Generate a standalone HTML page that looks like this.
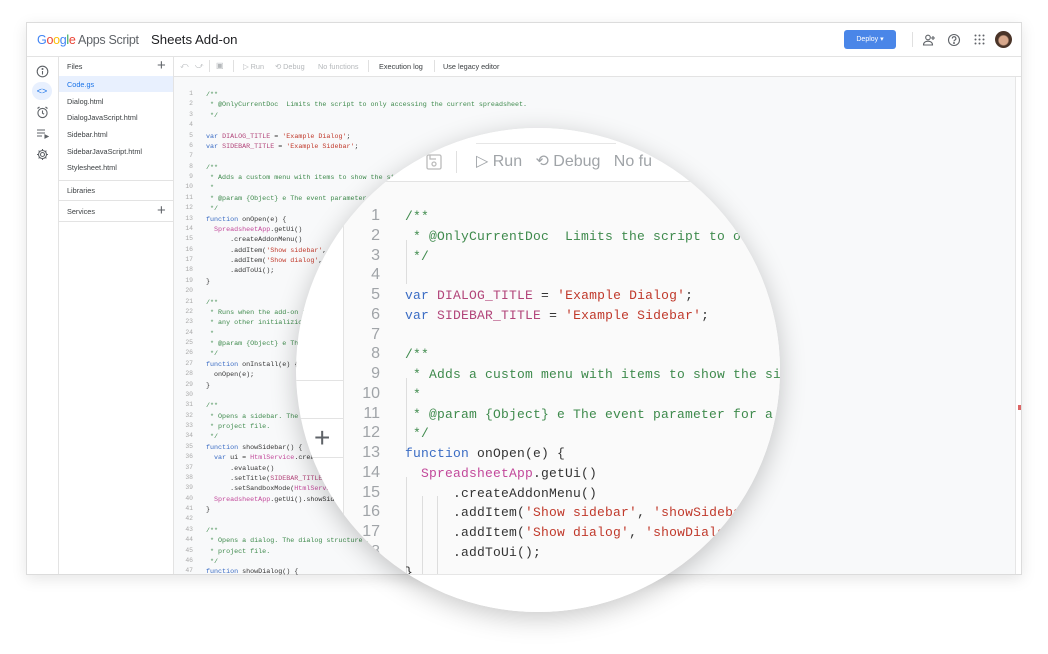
<!DOCTYPE html>
<html><head><meta charset="utf-8">
<style>
*{margin:0;padding:0;box-sizing:border-box}
body{width:1048px;height:654px;background:#fff;position:relative;overflow:hidden;font-family:"Liberation Sans",sans-serif;color:#3c4043}
.abs{position:absolute}
#win{left:26px;top:22px;width:996px;height:553px;background:#fff;border:1px solid #dcdcdc;box-shadow:0 4px 14px rgba(0,0,0,.10)}
.code{font-family:"Liberation Mono",monospace;white-space:pre;color:#333}
.c{color:#3e8a4c}.k{color:#3a6cc4}.v{color:#b2457a}.s{color:#c0392b}.p{color:#c2489a}
.ln{color:#aaa;text-align:right}
.fi{font-size:7.3px;color:#3c4043;position:absolute;left:67px}
.tb{position:absolute;top:62px;font-size:7.3px;color:#b5b8bb;white-space:pre}
</style></head><body>
<div id="win" class="abs"></div>
<!-- header -->
<div class="abs" style="left:37px;top:33px;font-size:12.5px;letter-spacing:-0.3px"><span style="color:#4285f4">G</span><span style="color:#ea4335">o</span><span style="color:#fbbc05">o</span><span style="color:#4285f4">g</span><span style="color:#34a853">l</span><span style="color:#ea4335">e</span> <span style="color:#5f6368">Apps Script</span></div>
<div class="abs" style="left:151px;top:32px;font-size:13.2px;color:#202124">Sheets Add-on</div>
<div class="abs" style="left:27px;top:56px;width:994px;height:1px;background:#e3e3e3"></div>
<div class="abs" style="left:844px;top:30px;width:52px;height:19px;background:#4a86e8;border-radius:3px;color:#fff;font-size:7px;line-height:19px;text-align:center">Deploy ▾</div>
<div class="abs" style="left:912px;top:32px;width:1px;height:15px;background:#e0e0e0"></div>
<svg class="abs" style="left:922px;top:33px" width="14" height="14" viewBox="0 0 14 14" fill="none" stroke="#5f6368" stroke-width="1.1"><circle cx="6" cy="4.5" r="2.3"/><path d="M1.5 12c0-2.5 2-3.8 4.5-3.8s4.5 1.3 4.5 3.8z"/><path d="M11 3v4M9 5h4"/></svg>
<svg class="abs" style="left:947px;top:33px" width="14" height="14" viewBox="0 0 14 14" fill="none" stroke="#5f6368" stroke-width="1.1"><circle cx="7" cy="7" r="5.5"/><path d="M5.3 5.5a1.8 1.8 0 1 1 2.3 1.7c-.5.2-.6.6-.6 1.2"/><circle cx="7" cy="10" r=".4" fill="#5f6368"/></svg>
<svg class="abs" style="left:974px;top:34px" width="11" height="11" viewBox="0 0 11 11" fill="#5f6368"><circle cx="1.5" cy="1.5" r="1"/><circle cx="5.5" cy="1.5" r="1"/><circle cx="9.5" cy="1.5" r="1"/><circle cx="1.5" cy="5.5" r="1"/><circle cx="5.5" cy="5.5" r="1"/><circle cx="9.5" cy="5.5" r="1"/><circle cx="1.5" cy="9.5" r="1"/><circle cx="5.5" cy="9.5" r="1"/><circle cx="9.5" cy="9.5" r="1"/></svg>
<div class="abs" style="left:995px;top:31px;width:17px;height:17px;border-radius:50%;background:radial-gradient(circle at 50% 55%,#d8a88c 0 35%,#4a3428 45%)"></div>
<!-- left rail -->
<div class="abs" style="left:58px;top:57px;width:1px;height:517px;background:#e3e3e3"></div>
<svg class="abs" style="left:36px;top:65px" width="13" height="13" viewBox="0 0 13 13" fill="none" stroke="#5f6368" stroke-width="1.1"><circle cx="6.5" cy="6.5" r="5.3"/><path d="M6.5 6v3.5"/><circle cx="6.5" cy="4" r=".5" fill="#5f6368"/></svg>
<div class="abs" style="left:32px;top:82px;width:20px;height:18px;border-radius:9px;background:#e8f0fe;color:#1a73e8;font-size:9px;text-align:center;line-height:18px">&lt;&gt;</div>
<svg class="abs" style="left:36px;top:106px" width="13" height="13" viewBox="0 0 13 13" fill="none" stroke="#5f6368" stroke-width="1.1"><circle cx="6.5" cy="7" r="4.6"/><path d="M6.5 4.5v2.7l1.6 1M1.5 2.5l2-1.5M11.5 2.5l-2-1.5"/></svg>
<svg class="abs" style="left:36px;top:128px" width="13" height="11" viewBox="0 0 13 11" fill="none" stroke="#5f6368" stroke-width="1.1"><path d="M1 2h8M1 5h8M1 8h5"/><path d="M9 7l3 1.5-3 1.5z" fill="#5f6368"/></svg>
<svg class="abs" style="left:36px;top:148px" width="13" height="13" viewBox="0 0 13 13" fill="none" stroke="#5f6368" stroke-width="1.1"><circle cx="6.5" cy="6.5" r="2"/><path d="M6.5 1v2M6.5 10v2M1 6.5h2M10 6.5h2M2.6 2.6l1.4 1.4M9 9l1.4 1.4M2.6 10.4L4 9M9 4l1.4-1.4"/><circle cx="6.5" cy="6.5" r="4"/></svg>
<!-- files panel -->
<div class="abs" style="left:173px;top:57px;width:1px;height:517px;background:#e3e3e3"></div>
<div class="fi" style="top:62px">Files</div>
<div class="abs" style="left:157px;top:57px;font-size:15px;color:#5f6368">+</div>
<div class="abs" style="left:59px;top:76px;width:114px;height:16px;background:#e8f0fe"></div>
<div class="fi" style="top:80px;color:#1a73e8">Code.gs</div>
<div class="fi" style="top:97px">Dialog.html</div>
<div class="fi" style="top:113px">DialogJavaScript.html</div>
<div class="fi" style="top:130px">Sidebar.html</div>
<div class="fi" style="top:147px">SidebarJavaScript.html</div>
<div class="fi" style="top:163px">Stylesheet.html</div>
<div class="abs" style="left:59px;top:180px;width:114px;height:1px;background:#e3e3e3"></div>
<div class="fi" style="top:186px">Libraries</div>
<div class="abs" style="left:59px;top:200px;width:114px;height:1px;background:#e3e3e3"></div>
<div class="fi" style="top:207px">Services</div>
<div class="abs" style="left:157px;top:202px;font-size:15px;color:#5f6368">+</div>
<div class="abs" style="left:59px;top:221px;width:114px;height:1px;background:#e3e3e3"></div>
<!-- toolbar -->
<div class="abs" style="left:174px;top:76px;width:847px;height:1px;background:#e3e3e3"></div>
<div class="tb" style="left:180px;font-size:8px;top:61px">⤺</div>
<div class="tb" style="left:195px;font-size:8px;top:61px">⤻</div>
<div class="abs" style="left:209px;top:60px;width:1px;height:12px;background:#e0e0e0"></div>
<div class="tb" style="left:216px;font-size:8px;top:61px">▣</div>
<div class="abs" style="left:233px;top:60px;width:1px;height:12px;background:#e0e0e0"></div>
<div class="tb" style="left:243px">▷ Run</div>
<div class="tb" style="left:275px">⟲ Debug</div>
<div class="tb" style="left:318px">No functions</div>
<div class="abs" style="left:368px;top:60px;width:1px;height:12px;background:#e0e0e0"></div>
<div class="abs" style="left:379px;top:62px;font-size:7.3px;color:#3c4043">Execution log</div>
<div class="abs" style="left:434px;top:60px;width:1px;height:12px;background:#e0e0e0"></div>
<div class="abs" style="left:443px;top:62px;font-size:7.3px;color:#3c4043">Use legacy editor</div>
<!-- code area -->
<div class="abs" style="left:174px;top:77px;width:841px;height:497px;background:#f8f9fa"></div>
<div class="abs" style="left:1015px;top:77px;width:1px;height:497px;background:#e6e6e6"></div>
<div class="abs" style="left:1018px;top:405px;width:3px;height:5px;background:#d66"></div>
<div class="abs code ln" style="left:176px;top:89px;width:17px;font-size:6.4px;line-height:10.37px">1
2
3
4
5
6
7
8
9
10
11
12
13
14
15
16
17
18
19
20
21
22
23
24
25
26
27
28
29
30
31
32
33
34
35
36
37
38
39
40
41
42
43
44
45
46
47</div>
<div class="abs code" style="left:206px;top:90px;font-size:6.7px;line-height:10.37px"><span class="c">/**
 * @OnlyCurrentDoc  Limits the script to only accessing the current spreadsheet.
 */</span>

<span class="k">var</span> <span class="v">DIALOG_TITLE</span> = <span class="s">'Example Dialog'</span>;
<span class="k">var</span> <span class="v">SIDEBAR_TITLE</span> = <span class="s">'Example Sidebar'</span>;

<span class="c">/**
 * Adds a custom menu with items to show the sidebar and dialog.
 *
 * @param {Object} e The event parameter for a simple onOpen trigger.
 */</span>
<span class="k">function</span> onOpen(e) {
  <span class="p">SpreadsheetApp</span>.getUi()
      .createAddonMenu()
      .addItem(<span class="s">'Show sidebar'</span>, <span class="s">'showSidebar'</span>)
      .addItem(<span class="s">'Show dialog'</span>, <span class="s">'showDialog'</span>)
      .addToUi();
}

<span class="c">/**
 * Runs when the add-on is installed; calls onOpen() to ensure menu creation and
 * any other initializion work is done immediately.
 *
 * @param {Object} e The event parameter for a simple onInstall trigger.
 */</span>
<span class="k">function</span> onInstall(e) {
  onOpen(e);
}

<span class="c">/**
 * Opens a sidebar. The sidebar structure is described in the Sidebar.html
 * project file.
 */</span>
<span class="k">function</span> showSidebar() {
  <span class="k">var</span> ui = <span class="p">HtmlService</span>.createTemplateFromFile(<span class="s">'Sidebar'</span>)
      .evaluate()
      .setTitle(<span class="v">SIDEBAR_TITLE</span>)
      .setSandboxMode(<span class="p">HtmlService</span>.SandboxMode.IFRAME);
  <span class="p">SpreadsheetApp</span>.getUi().showSidebar(ui);
}

<span class="c">/**
 * Opens a dialog. The dialog structure is described in the Dialog.html
 * project file.
 */</span>
<span class="k">function</span> showDialog() {</div>

<!-- magnifier -->
<div class="abs" style="left:296px;top:128px;width:484px;height:484px;border-radius:50%;box-shadow:0 6px 26px rgba(0,0,0,.22);background:#fff;overflow:hidden">
  <div class="abs" style="left:0;top:0;width:484px;height:53px;background:#fff"></div>
  <div class="abs" style="left:180px;top:15px;width:140px;height:1px;background:#e6e6e6"></div>
  <div class="abs" style="left:0;top:53px;width:400px;height:1px;background:#e3e3e3"></div>
  <svg class="abs" style="left:129px;top:25px" width="18" height="18" viewBox="0 0 18 18" fill="none" stroke="#bbb" stroke-width="1.3"><rect x="2" y="2" width="14" height="14" rx="1.5"/><circle cx="9" cy="11" r="2"/><path d="M5 2v4h6"/></svg>
  <div class="abs" style="left:160px;top:23px;width:1px;height:22px;background:#e0e0e0"></div>
  <div class="abs" style="left:180px;top:23px;font-size:16px;color:#a0a4a8;white-space:pre">▷ Run   ⟲ Debug   No fu</div>
  <div class="abs" style="left:47px;top:54px;width:437px;height:392px;background:#fafafa"></div>
  <div class="abs" style="left:47px;top:54px;width:1px;height:392px;background:#e3e3e3"></div>
  <div class="abs" style="left:0;top:252px;width:47px;height:1px;background:#e3e3e3"></div>
  <div class="abs" style="left:0;top:290px;width:47px;height:1px;background:#e3e3e3"></div>
  <div class="abs" style="left:0;top:329px;width:47px;height:1px;background:#e3e3e3"></div>
  <div class="abs" style="left:18px;top:296px;font-size:28px;font-weight:300;color:#5f6368;line-height:28px">+</div>
  <div class="abs ln" style="left:52px;top:78px;width:32px;font-size:16px;line-height:19.75px;color:#a0a4a8">1<br>2<br>3<br>4<br>5<br>6<br>7<br>8<br>9<br>10<br>11<br>12<br>13<br>14<br>15<br>16<br>17<br>18</div>
  <div class="abs" style="left:110px;top:112px;width:1px;height:44px;background:#ddd"></div>
  <div class="abs" style="left:110px;top:250px;width:1px;height:72px;background:#ddd"></div>
  <div class="abs" style="left:110px;top:349px;width:1px;height:98px;background:#ddd"></div>
  <div class="abs" style="left:126px;top:368px;width:1px;height:79px;background:#ddd"></div>
  <div class="abs" style="left:141px;top:368px;width:1px;height:79px;background:#ddd"></div>
  <div class="abs code" style="left:109px;top:79px;font-size:13px;line-height:19.75px;letter-spacing:0.2px"><span class="c">/**
 * @OnlyCurrentDoc  Limits the script to only accessing the current spreadsheet.
 */</span>

<span class="k">var</span> <span class="v">DIALOG_TITLE</span> = <span class="s">'Example Dialog'</span>;
<span class="k">var</span> <span class="v">SIDEBAR_TITLE</span> = <span class="s">'Example Sidebar'</span>;

<span class="c">/**
 * Adds a custom menu with items to show the sidebar and dialog.
 *
 * @param {Object} e The event parameter for a simple onOpen trigger.
 */</span>
<span class="k">function</span> onOpen(e) {
  <span class="p">SpreadsheetApp</span>.getUi()
      .createAddonMenu()
      .addItem(<span class="s">'Show sidebar'</span>, <span class="s">'showSidebar'</span>)
      .addItem(<span class="s">'Show dialog'</span>, <span class="s">'showDialog'</span>)
      .addToUi();
}</div>
  <div class="abs" style="left:0;top:446px;width:484px;height:40px;background:#fff;border-top:1px solid #e6e6e6"></div>
</div>
</body></html>
